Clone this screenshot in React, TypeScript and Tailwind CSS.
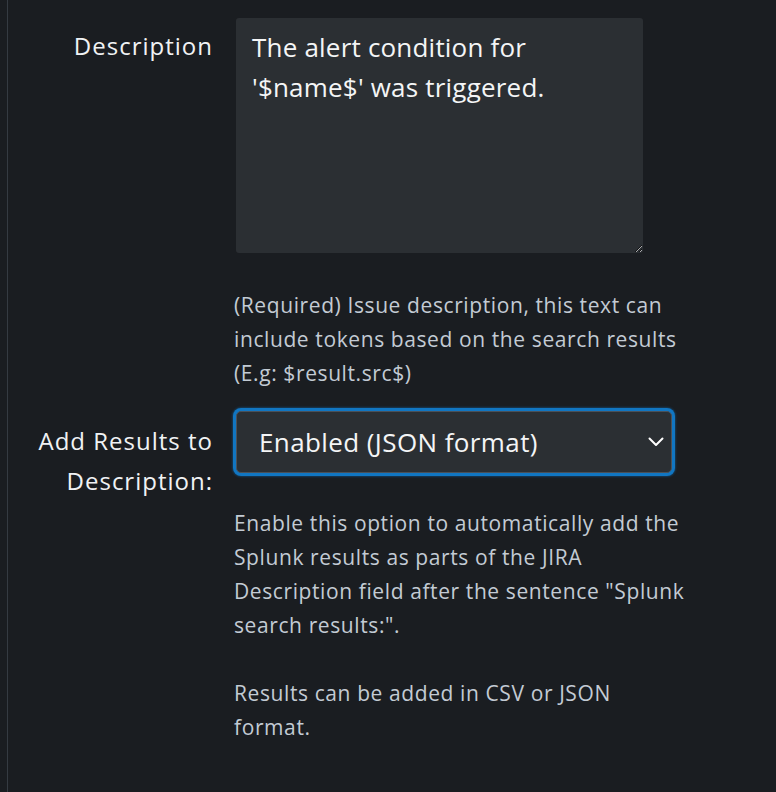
const font = { fontFamily: "'Open Sans', 'Noto Sans', sans-serif" };

function FieldLabel({ children, className = "" }: { children: React.ReactNode; className?: string }) {
  return (
    <div className={`text-right text-[24px] leading-[40px] tracking-[1px] text-[#f0f2f4] ${className}`}>{children}</div>
  );
}

function HelpText({ children }: { children: React.ReactNode }) {
  return <div className="text-[21px] leading-[34px] tracking-[0.6px] text-[#c3cbd4]">{children}</div>;
}

export default function App() {
  return (
    <div className="min-h-[792px] w-[776px] bg-[#1a1d21] pl-[7px]" style={font}>
      <div className="min-h-[792px] border-l border-[#353b42] pt-[18px]">
        {/* Description */}
        <div className="grid grid-cols-[205px_1fr] gap-x-[21px]">
          <FieldLabel className="pt-[8px]">Description</FieldLabel>
          <div>
            <textarea
              className="ml-[2px] block h-[235px] w-[407px] resize rounded-[3px] bg-[#2b2f33] px-[16px] pt-[9px] text-[26px] leading-[40px] tracking-[0.2px] text-[#f4f5f6] outline-none"
              defaultValue={"The alert condition for '$name$' was triggered."}
            />
            <div className="mt-[35px] w-[454px]">
              <HelpText>
                (Required) Issue description, this text can include tokens based on the search results
                (E.g: $result.src$)
              </HelpText>
            </div>
          </div>
        </div>

        {/* Add Results to Description */}
        <div className="mt-[21px] grid grid-cols-[205px_1fr] gap-x-[21px]">
          <FieldLabel className="pt-[10px]">
            Add Results to
            <br />
            Description:
          </FieldLabel>
          <div>
            <div className="ml-[2px] flex h-[62px] w-[436px] items-center justify-between rounded-[5px] border border-[#4a5159] bg-[#2b2f33] pl-[22px] pr-[7px] shadow-[0_0_0_3px_#1176c2,0_0_2px_4px_rgba(17,118,194,0.35)]">
              <span className="text-[26px] tracking-[0.4px] text-[#f4f5f6]">Enabled (JSON format)</span>
              <svg viewBox="0 0 16 10" className="h-[10px] w-[16px]" fill="none" stroke="white" strokeWidth="2" strokeLinecap="round" strokeLinejoin="round">
                <polyline points="1.5 1.5 8 8 14.5 1.5" />
              </svg>
            </div>
            <div className="mt-[33px] w-[454px]">
              <HelpText>
                Enable this option to automatically add the Splunk results as parts of the JIRA Description field after the
                sentence "Splunk search results:".
              </HelpText>
              <div className="h-[34px]" />
              <HelpText>Results can be added in CSV or JSON format.</HelpText>
            </div>
          </div>
        </div>
      </div>
    </div>
  );
}
